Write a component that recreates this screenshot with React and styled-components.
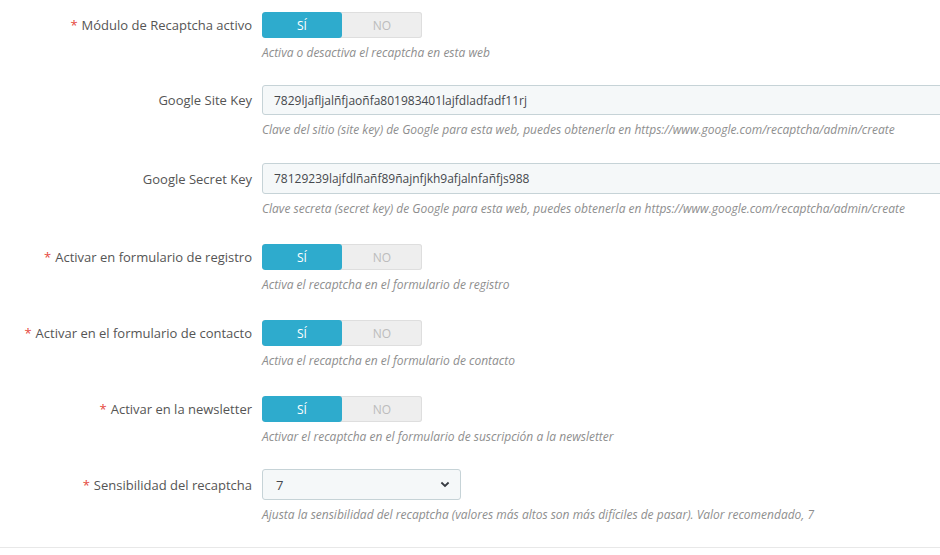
import React from "react";
import styled, { createGlobalStyle } from "styled-components";

const Global = createGlobalStyle`
  html, body { margin: 0; padding: 0; background: #fff; overflow: hidden; }
  body { font-family: "Open Sans", "Noto Sans", sans-serif; }
`;

const Page = styled.div`
  width: 940px;
  height: 555px;
  padding-top: 12px;
  box-sizing: border-box;
  overflow: hidden;
`;

const Form = styled.div`
  display: flex;
  flex-direction: column;
  border-bottom: 1px solid #e8e8e8;
`;

const Group = styled.div`
  display: grid;
  grid-template-columns: 252px 1fr;
  column-gap: 10px;
  align-items: center;
  margin-bottom: ${(p) => p.$mb}px;
`;

const Label = styled.label`
  text-align: right;
  font-size: 13px;
  color: #555;
  white-space: nowrap;
`;

const Req = styled.span`
  color: #e5483c;
  margin-right: 4px;
`;

const Help = styled.div`
  grid-column: 2;
  margin-top: 6px;
  font-size: 12px;
  line-height: 18px;
  font-style: italic;
  color: #8e8e8e;
  white-space: nowrap;
`;

const Switch = styled.div`
  display: flex;
  width: 160px;
  height: 26px;
  border-radius: 3px;
  overflow: hidden;
  background: #eee;
  box-shadow: inset 0 0 0 1px #dedede;
`;

const SwitchOpt = styled.span`
  flex: 1;
  display: flex;
  align-items: center;
  justify-content: center;
  font-size: 12px;
  text-transform: uppercase;
  color: ${(p) => (p.$on ? "#fff" : "#bcbcbc")};
  background: ${(p) => (p.$on ? "#2eabcd" : "transparent")};
  border-radius: ${(p) => (p.$on ? "3px" : "0")};
`;

const Input = styled.div`
  width: 700px;
  height: ${(p) => p.$h}px;
  box-sizing: border-box;
  display: flex;
  align-items: center;
  padding: 0 11px;
  background: #f5f8f9;
  border: 1px solid #c6d3d7;
  border-radius: 3px;
  font-size: 12px;
  color: #45484d;
  white-space: nowrap;
`;

const Select = styled.div`
  width: 199px;
  height: 31px;
  box-sizing: border-box;
  display: flex;
  align-items: center;
  justify-content: space-between;
  padding: 0 10px 0 13px;
  background: #f5f8f9;
  border: 1px solid #c6d3d7;
  border-radius: 3px;
  font-size: 13px;
  color: #45484d;
`;

const Chevron = () => (
  <svg width="10" height="7" viewBox="0 0 10 7">
    <path d="M1.4 1.5 L5 4.9 L8.6 1.5" fill="none" stroke="#363a41" strokeWidth="1.8" />
  </svg>
);

const YesNo = () => (
  <Switch>
    <SwitchOpt $on>Sí</SwitchOpt>
    <SwitchOpt>No</SwitchOpt>
  </Switch>
);

const rows = [
  { req: true, label: "Módulo de Recaptcha activo", type: "switch", help: "Activa o desactiva el recaptcha en esta web", mb: 23 },
  { label: "Google Site Key", type: "input", h: 30, value: "7829ljafljalñfjaoñfa801983401lajfdladfadf11rj", help: "Clave del sitio (site key) de Google para esta web, puedes obtenerla en https://www.google.com/recaptcha/admin/create", mb: 24 },
  { label: "Google Secret Key", type: "input", h: 31, value: "78129239lajfdlñañf89ñajnfjkh9afjalnfañfjs988", help: "Clave secreta (secret key) de Google para esta web, puedes obtenerla en https://www.google.com/recaptcha/admin/create", mb: 26 },
  { req: true, label: "Activar en formulario de registro", type: "switch", help: "Activa el recaptcha en el formulario de registro", mb: 26 },
  { req: true, label: "Activar en el formulario de contacto", type: "switch", help: "Activa el recaptcha en el formulario de contacto", mb: 26 },
  { req: true, label: "Activar en la newsletter", type: "switch", help: "Activar el recaptcha en el formulario de suscripción a la newsletter", mb: 23 },
  { req: true, label: "Sensibilidad del recaptcha", type: "select", value: "7", help: "Ajusta la sensibilidad del recaptcha (valores más altos son más difíciles de pasar). Valor recomendado, 7", mb: 23 },
];

export default function App() {
  return (
    <Page>
      <Global />
      <Form>
        {rows.map((r) => (
          <Group key={r.label} $mb={r.mb}>
            <Label>
              {r.req && <Req>*</Req>}
              {r.label}
            </Label>
            {r.type === "switch" && <YesNo />}
            {r.type === "input" && <Input $h={r.h}>{r.value}</Input>}
            {r.type === "select" && (
              <Select>
                <span>{r.value}</span>
                <Chevron />
              </Select>
            )}
            <Help>{r.help}</Help>
          </Group>
        ))}
      </Form>
    </Page>
  );
}
